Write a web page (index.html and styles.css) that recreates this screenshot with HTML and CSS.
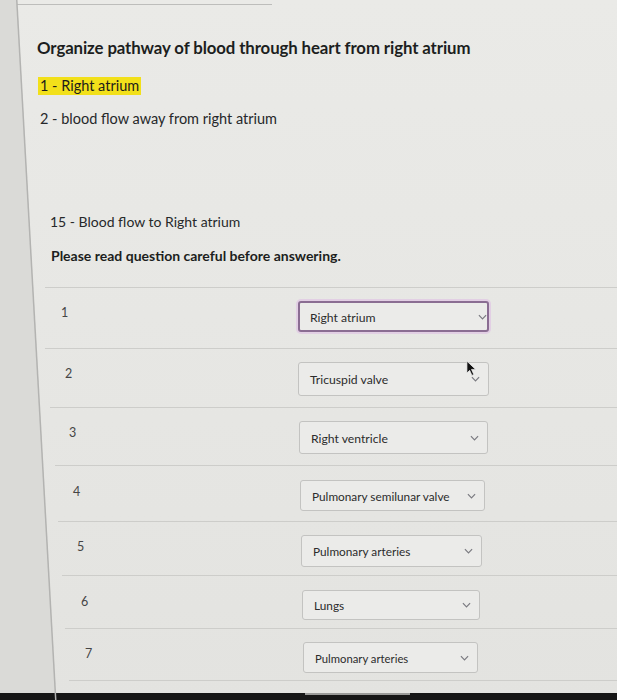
FILE: index.html
```html
<!DOCTYPE html>
<html>
<head>
<meta charset="utf-8">
<link rel="stylesheet" href="styles.css">
</head>
<body>
<div class="screen">
  <div class="topline"></div>
  <div class="content">
    <h1 class="title">Organize pathway of blood through heart from right atrium</h1>
    <p class="line hl-line"><span class="hl">1 - Right atrium</span></p>
    <p class="line l2">2 - blood flow away from right atrium</p>
    <p class="line l15">15 - Blood flow to Right atrium</p>
    <p class="line note">Please read question careful before answering.</p>
    <div class="rows">
      <div class="row r1"><span class="num">1</span><div class="select focused"><span>Right atrium</span><svg class="chev" viewBox="0 0 10 6" width="9" height="6"><path d="M1 1 L5 5 L9 1" fill="none" stroke="#7a7a80" stroke-width="1.3"/></svg></div></div>
      <div class="row r2"><span class="num">2</span><div class="select"><span>Tricuspid valve</span><svg class="chev" viewBox="0 0 10 6" width="9" height="6"><path d="M1 1 L5 5 L9 1" fill="none" stroke="#7a7a80" stroke-width="1.3"/></svg></div></div>
      <div class="row r3"><span class="num">3</span><div class="select"><span>Right ventricle</span><svg class="chev" viewBox="0 0 10 6" width="9" height="6"><path d="M1 1 L5 5 L9 1" fill="none" stroke="#7a7a80" stroke-width="1.3"/></svg></div></div>
      <div class="row r4"><span class="num">4</span><div class="select"><span>Pulmonary semilunar valve</span><svg class="chev" viewBox="0 0 10 6" width="9" height="6"><path d="M1 1 L5 5 L9 1" fill="none" stroke="#7a7a80" stroke-width="1.3"/></svg></div></div>
      <div class="row r5"><span class="num">5</span><div class="select"><span>Pulmonary arteries</span><svg class="chev" viewBox="0 0 10 6" width="9" height="6"><path d="M1 1 L5 5 L9 1" fill="none" stroke="#7a7a80" stroke-width="1.3"/></svg></div></div>
      <div class="row r6"><span class="num">6</span><div class="select"><span>Lungs</span><svg class="chev" viewBox="0 0 10 6" width="9" height="6"><path d="M1 1 L5 5 L9 1" fill="none" stroke="#7a7a80" stroke-width="1.3"/></svg></div></div>
      <div class="row r7"><span class="num">7</span><div class="select"><span>Pulmonary arteries</span><svg class="chev" viewBox="0 0 10 6" width="9" height="6"><path d="M1 1 L5 5 L9 1" fill="none" stroke="#7a7a80" stroke-width="1.3"/></svg></div></div>
    </div>
  </div>
  <div class="bezel"><div class="peek"></div></div>
  <svg class="cursor" viewBox="0 0 12 18" width="11" height="17"><path d="M1 1 L1 14 L4 11 L6.5 16.5 L8.5 15.5 L6 10 L10.5 10 Z" fill="#111" stroke="#eee" stroke-width="0.8"/></svg>
</div>
</body>
</html>
```

FILE: styles.css
```css
html, body {
  margin: 0;
  padding: 0;
}
body {
  width: 617px;
  height: 700px;
  overflow: hidden;
  background: #e6e6e3;
  font-family: Lato, "Open Sans", sans-serif;
  color: #26282a;
}
.screen {
  position: relative;
  width: 617px;
  height: 700px;
  background: linear-gradient(180deg, #eaeae7 0%, #e6e6e3 60%, #e3e3e0 100%);
  display: flex;
  flex-direction: column;
}
.screen::before {
  content: "";
  position: absolute;
  left: 0;
  top: 0;
  width: 70px;
  height: 700px;
  background: #dadad7;
  clip-path: polygon(0 0, 17px 0, 56px 700px, 0 700px);
}
.screen::after {
  content: "";
  position: absolute;
  left: 0;
  top: 0;
  width: 70px;
  height: 700px;
  background: #b3b3b1;
  clip-path: polygon(16px 0, 17.5px 0, 56.5px 700px, 55px 700px);
}
.topline {
  position: absolute;
  left: 17px;
  top: 4px;
  width: 255px;
  height: 1px;
  background: #bdbdbb;
}
.content {
  flex: 1;
  padding-left: 37px;
}
.title {
  margin: 0;
  padding-top: 37px;
  font-size: 16.8px;
  line-height: 22px;
  font-weight: 700;
  color: #1c1e20;
  letter-spacing: -0.1px;
}
.line {
  margin: 0;
  font-size: 14.5px;
  line-height: 20px;
}
.hl-line {
  margin-top: 17px;
  margin-left: 1px;
}
.hl {
  background: #f2e01a;
  padding: 0 2px 1px 2px;
  color: #1d1d1b;
}
.l2 {
  margin-top: 13px;
  margin-left: 3px;
}
.l15 {
  margin-top: 83px;
  margin-left: 13px;
  font-size: 14px;
}
.note {
  margin-top: 14px;
  margin-left: 14px;
  font-size: 14px;
  font-weight: 700;
  color: #1c1e20;
}
.rows {
  margin-top: 21px;
  margin-left: 8px;
  border-top: 1px solid #cdcdca;
}
.row {
  display: flex;
  align-items: flex-start;
  border-bottom: 1px solid #cdcdca;
  padding-top: 13px;
  padding-bottom: 16px;
}
.num {
  width: 253px;
  padding-left: 16px;
  padding-top: 5px;
  font-size: 12.5px;
  line-height: 14px;
  color: #454545;
  box-sizing: border-box;
}
.select {
  box-sizing: border-box;
  width: 191px;
  height: 31px;
  border: 1px solid #c3c3c1;
  border-radius: 3px;
  background: #ebebe9;
  display: flex;
  align-items: center;
  justify-content: space-between;
  padding: 0 8px 0 11px;
  font-size: 11.8px;
  color: #2c2c2c;
}
.select span {
  padding-top: 1px;
}
.select.focused {
  border: 2px solid #8a6d92;
  box-shadow: 0 0 0 2px #e2cfe4;
  padding-left: 10px;
  padding-right: 0;
  font-size: 12.2px;
}
.chev {
  flex: none;
}
.r2 { margin-left: 5px; padding-top: 13px; padding-bottom: 11px; }
.r2 .num { width: 248px; padding-left: 15px; }
.r2 .select { height: 34px; font-size: 12.2px; }
.r3 { margin-left: 10px; padding-top: 13px; padding-bottom: 11px; }
.r3 .num { width: 244px; padding-left: 14px; }
.r3 .select { width: 189px; height: 33px; font-size: 12.2px; }
.r4 { margin-left: 13px; padding-top: 14px; padding-bottom: 10px; }
.r4 .num { width: 242px; padding-left: 15px; }
.r4 .select { width: 185px; height: 31px; }
.r5 { margin-left: 17px; padding-top: 13px; padding-bottom: 8px; }
.r5 .num { width: 239px; padding-left: 15px; }
.r5 .select { width: 181px; height: 32px; }
.r6 { margin-left: 20px; padding-top: 14px; padding-bottom: 8px; }
.r6 .num { width: 237px; padding-left: 16px; }
.r6 .select { width: 178px; height: 30px; }
.r7 { margin-left: 24px; padding-top: 13px; padding-bottom: 7px; }
.r7 .num { width: 234px; padding-left: 16px; }
.r7 .select { width: 175px; height: 31px; font-size: 11.3px; }
.bezel {
  position: absolute;
  left: 0;
  bottom: 0;
  width: 617px;
  height: 7px;
  background: #161616;
}
.peek {
  position: absolute;
  left: 305px;
  top: 0;
  width: 105px;
  height: 2px;
  background: #9a9a98;
}
.cursor {
  position: absolute;
  left: 466px;
  top: 360px;
}
```
